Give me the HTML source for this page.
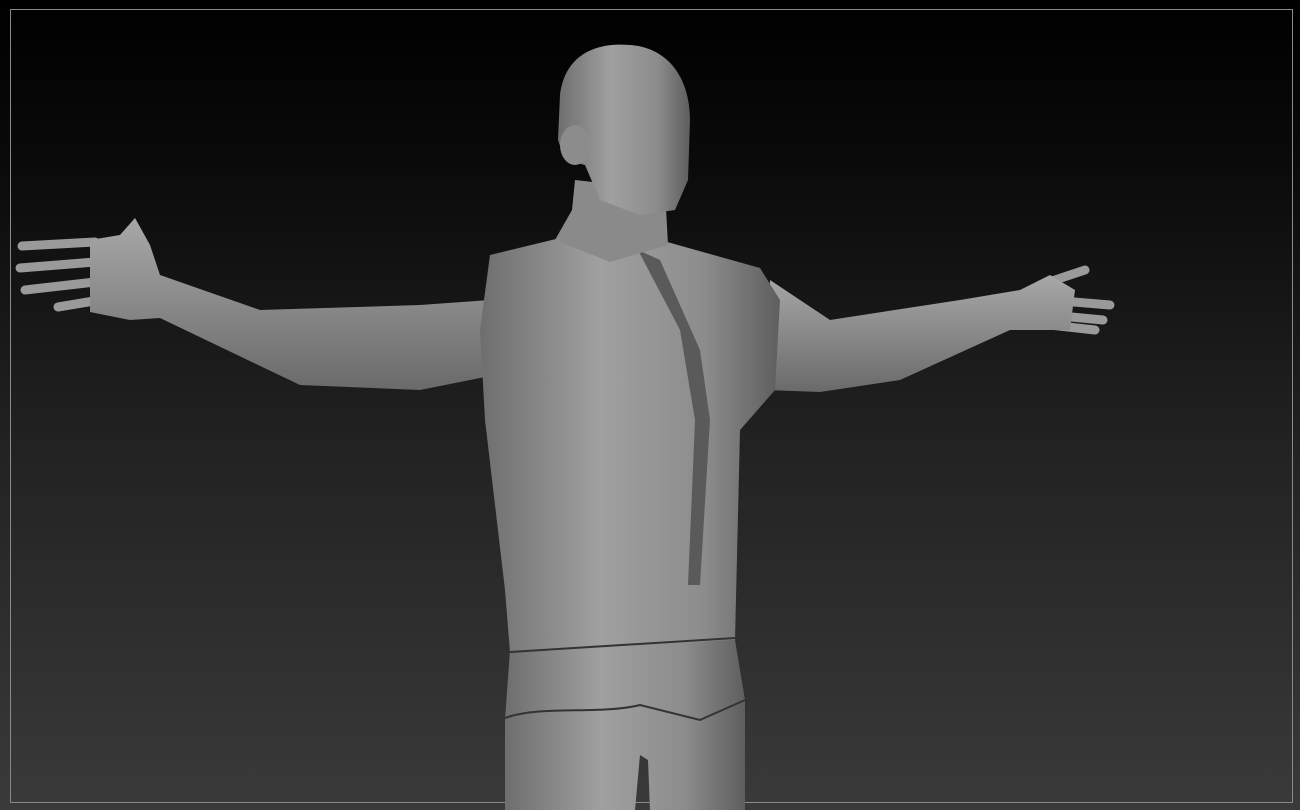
<!DOCTYPE html>
<html><head><style>
html,body{margin:0;padding:0;width:1300px;height:810px;overflow:hidden;background:linear-gradient(#000 0%,#0a0a0a 20%,#222 55%,#3a3a3a 100%);}
.frame{position:absolute;left:10px;top:9px;width:1281px;height:792px;border:1px solid #8a8a8a;}
svg{position:absolute;left:0;top:0}
</style></head><body>
<div class="frame"></div>
<svg width="1300" height="810" viewBox="0 0 1300 810">
<defs>
<linearGradient id="b" x1="0" y1="0" x2="1" y2="0">
<stop offset="0" stop-color="#6e6e6e"/><stop offset="0.4" stop-color="#a0a0a0"/><stop offset="0.75" stop-color="#8c8c8c"/><stop offset="1" stop-color="#5e5e5e"/></linearGradient>
<linearGradient id="a" x1="0" y1="0" x2="0" y2="1">
<stop offset="0" stop-color="#a8a8a8"/><stop offset="1" stop-color="#6a6a6a"/></linearGradient>
</defs>
<!-- fingers left -->
<g stroke="#9a9a9a" stroke-width="9" stroke-linecap="round">
<line x1="22" y1="246" x2="95" y2="242"/><line x1="20" y1="268" x2="95" y2="262"/><line x1="25" y1="290" x2="95" y2="282"/><line x1="58" y1="307" x2="100" y2="300"/>
<line x1="1110" y1="305" x2="1050" y2="300"/><line x1="1103" y1="320" x2="1050" y2="315"/><line x1="1095" y1="330" x2="1050" y2="325"/><line x1="1085" y1="270" x2="1040" y2="285"/>
</g>
<!-- left arm -->
<path d="M90 240 L120 235 L135 218 L150 245 L160 275 L260 310 L420 305 L490 300 L495 375 L420 390 L300 385 L160 318 L130 320 L90 312 Z" fill="url(#a)"/>
<!-- right arm -->
<path d="M770 280 L830 320 L960 300 L1020 290 L1050 275 L1075 290 L1070 330 L1010 330 L900 380 L820 392 L765 390 Z" fill="url(#a)"/>
<!-- legs -->
<path d="M510 650 L735 640 L745 700 L745 810 L650 810 L648 760 L640 755 L635 810 L505 810 L505 720 Z" fill="url(#b)"/>
<path d="M505 718 C540 705 600 715 640 705 L700 720 L745 700" stroke="#333" stroke-width="2" fill="none"/>
<!-- torso -->
<path d="M490 255 L560 238 L660 240 L760 268 L780 300 L775 390 L740 430 L735 640 L510 652 L505 590 L485 420 L480 330 Z" fill="url(#b)"/>
<path d="M510 652 L735 638" stroke="#333" stroke-width="2"/>
<!-- zipper -->
<path d="M638 250 L660 260 L700 350 L710 420 L700 585 L688 585 L695 420 L680 330 Z" fill="#5a5a5a"/>
<!-- neck -->
<path d="M575 180 L665 190 L668 245 L610 262 L555 240 L572 210 Z" fill="#8a8a8a"/>
<!-- head -->
<path d="M560 95 C565 55 595 42 630 45 C670 48 690 80 690 120 L688 180 L675 210 L640 215 L600 200 L585 165 L565 160 L558 140 Z" fill="url(#b)"/>
<ellipse cx="575" cy="145" rx="15" ry="20" fill="#8c8c8c"/>
</svg>
</body></html>
